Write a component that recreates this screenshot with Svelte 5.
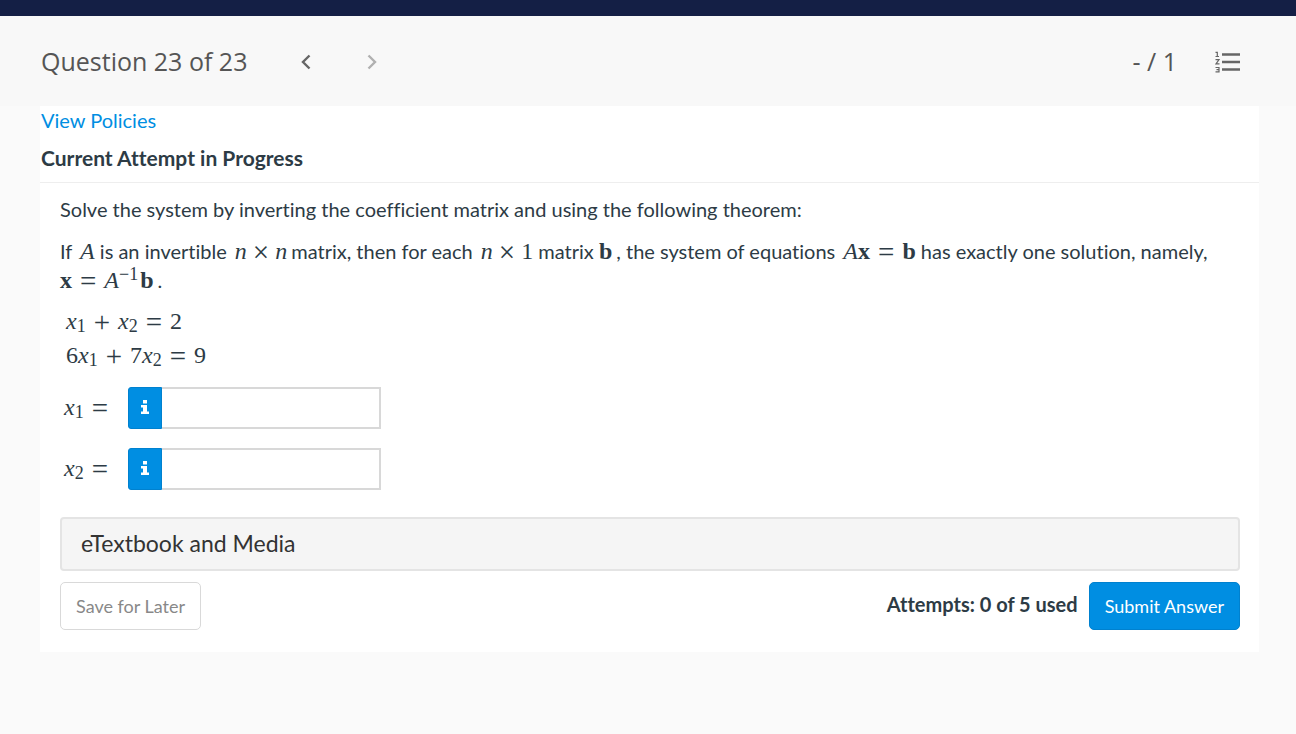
<script>
  let answers = $state(['', '']);
</script>

<div class="brand-bar"></div>

<header>
  <h1>Question 23 of 23</h1>
  <nav aria-label="Question navigation">
    <button class="icon-btn" aria-label="Previous question">
      <svg width="12" height="16" viewBox="0 0 12 16"><path d="M9.500 1.500 3 8l6.500 6.500" /></svg>
    </button>
    <button class="icon-btn" aria-label="Next question" disabled>
      <svg width="12" height="16" viewBox="0 0 12 16"><path d="M2.500 1.500 9 8l-6.500 6.500" /></svg>
    </button>
  </nav>
  <span class="score">- / 1</span>
  <button class="icon-btn" aria-label="Question list">
    <svg class="list" width="26" height="22" viewBox="0 0 26 22">
      <path class="rule" d="M7 3.500h18M7 11h18M7 18.500h18" />
      <path class="digit" d="M.5 1.300H2.300V5.500M.5 5.500H4M.5 8.700H4L1 12.800H4.500M.5 16.500H4V20.800H.5M1.500 18.600H4" />
    </svg>
  </button>
</header>

<main>
  <a class="policies" href="#policies">View Policies</a>
  <h2>Current Attempt in Progress</h2>

  <section>
    <p>Solve the system by inverting the coefficient matrix and using the following theorem:</p>
    <p>
      If <span class="math pre"><var>A</var></span> is an invertible
      <span class="math pre post"><var>n</var><i class="op times">×</i><var>n</var></span>matrix, then for each
      <span class="math pre"><var>n</var><i class="op times">×</i>1</span> matrix
      <span class="math post"><b>b</b></span>, the system of equations
      <span class="math pre"><var>A</var><b>x</b><i class="op">=</i><b>b</b></span> has exactly one solution, namely,
      <span class="math post"><b>x</b><i class="op">=</i><var>A</var><sup>−1</sup><b>b</b></span>.
    </p>

    <div class="system">
      <div class="math"><var>x</var><sub>1</sub><i class="op">+</i><var>x</var><sub>2</sub><i class="op">=</i>2</div>
      <div class="math">6<var>x</var><sub>1</sub><i class="op">+</i>7<var>x</var><sub>2</sub><i class="op">=</i>9</div>
    </div>

    {#each answers as _, i}
      <div class="answer">
        <label class="math" for="answer-{i}"><var>x</var><sub>{i + 1}</sub><i class="op">=</i></label>
        <button class="info" aria-label="Input help">
          <svg width="8" height="14" viewBox="0 0 8 14"><path d="M2 0h4v3.500H2zM0 5h6v6.500h2V14H0v-2.500h2v-4H0z" /></svg>
        </button>
        <input id="answer-{i}" type="text" bind:value={answers[i]} />
      </div>
    {/each}

    <button class="media">eTextbook and Media</button>

    <footer>
      <button class="btn save">Save for Later</button>
      <span class="attempts">Attempts: 0 of 5 used</span>
      <button class="btn submit">Submit Answer</button>
    </footer>
  </section>
</main>

<style>
  :global(body) {
    background: #fafafa;
    color: #2d3b45;
    font-family: Lato, sans-serif;
    font-size: 20px;
    line-height: 28px;
    font-variant-ligatures: no-common-ligatures;
  }
  button {
    font-family: inherit;
    cursor: pointer;
  }
  h1, h2, p {
    margin: 0;
  }
  .brand-bar {
    height: 16px;
    background: #141f45;
  }
  header {
    display: flex;
    align-items: center;
    height: 90px;
    padding: 0 51px 0 41px;
    background: #f8f8f8;
    color: #555;
    font-family: "Open Sans", sans-serif;
    font-size: 25px;
  }
  h1 {
    font-size: inherit;
    font-weight: 400;
  }
  nav {
    display: flex;
    gap: 46px;
    margin-left: 49px;
  }
  .icon-btn {
    display: flex;
    padding: 5px 4px 3px;
    border: 0;
    background: none;
  }
  .icon-btn svg {
    fill: none;
    stroke: #666;
    stroke-width: 2.4;
  }
  .icon-btn:disabled svg {
    stroke: #b0b0b0;
  }
  .icon-btn .digit {
    stroke-width: 1.2;
  }
  .score {
    margin: 0 34px 0 auto;
  }
  main {
    margin: 0 37px 0 40px;
    background: #fff;
  }
  .policies {
    display: block;
    padding: 0 1px 1px;
    color: #008ee2;
    text-decoration: none;
  }
  h2 {
    padding: 9px 1px 10px;
    border-bottom: 1px solid #eee;
    font-size: 21px;
    font-weight: 700;
  }
  section {
    padding: 12px 19px 22px 20px;
  }
  p {
    line-height: 29px;
  }
  p + p {
    margin-top: 13px;
  }
  .math {
    font-family: "Liberation Serif", serif;
    font-size: 24px;
    line-height: 24px;
    white-space: nowrap;
  }
  .pre {
    margin-left: 3px;
  }
  .post {
    margin-right: 4px;
  }
  .op {
    margin: 0 8px;
    font-size: 29px;
    font-style: normal;
    line-height: 0;
    vertical-align: -3px;
  }
  .times {
    margin: 0 6px;
  }
  sub, sup {
    font-size: 18px;
    line-height: 0;
  }
  sub {
    vertical-align: -3px;
  }
  sup {
    margin-right: 2px;
    vertical-align: 8px;
  }
  .system {
    padding: 0 6px;
    margin: 9px 0 15px;
  }
  .system .math {
    line-height: 34px;
  }
  .answer {
    display: flex;
    align-items: center;
    margin-bottom: 19px;
  }
  .answer label {
    width: 68px;
    padding: 0 0 2px 4px;
    box-sizing: border-box;
  }
  .info {
    display: grid;
    place-items: center;
    width: 34px;
    height: 42px;
    padding: 0 0 2px;
    border: 1px solid #0081cf;
    border-radius: 3px 0 0 3px;
    background: #008ee2;
    fill: #fff;
  }
  input {
    width: 219px;
    height: 42px;
    padding: 0 10px;
    box-sizing: border-box;
    border: 2px solid #d8d8d8;
    border-left: 0;
    background: #fff;
    font: inherit;
  }
  .media {
    display: block;
    width: 100%;
    height: 54px;
    margin: 27px 0 11px;
    padding: 0 19px 2px;
    border: 2px solid #e4e4e4;
    border-radius: 4px;
    background: #f5f5f5;
    color: #333;
    font-size: 23px;
    text-align: left;
  }
  footer {
    display: flex;
    align-items: center;
    gap: 11px;
  }
  .btn {
    height: 48px;
    padding: 0 15px;
    border: 1px solid #d9d9d9;
    border-radius: 5px;
    background: #fff;
    color: #888;
    font-size: 18px;
  }
  .submit {
    border-color: #0081cf;
    background: #008ee2;
    color: #fff;
  }
  .attempts {
    margin-left: auto;
    padding-bottom: 4px;
    font-weight: 700;
  }
</style>
